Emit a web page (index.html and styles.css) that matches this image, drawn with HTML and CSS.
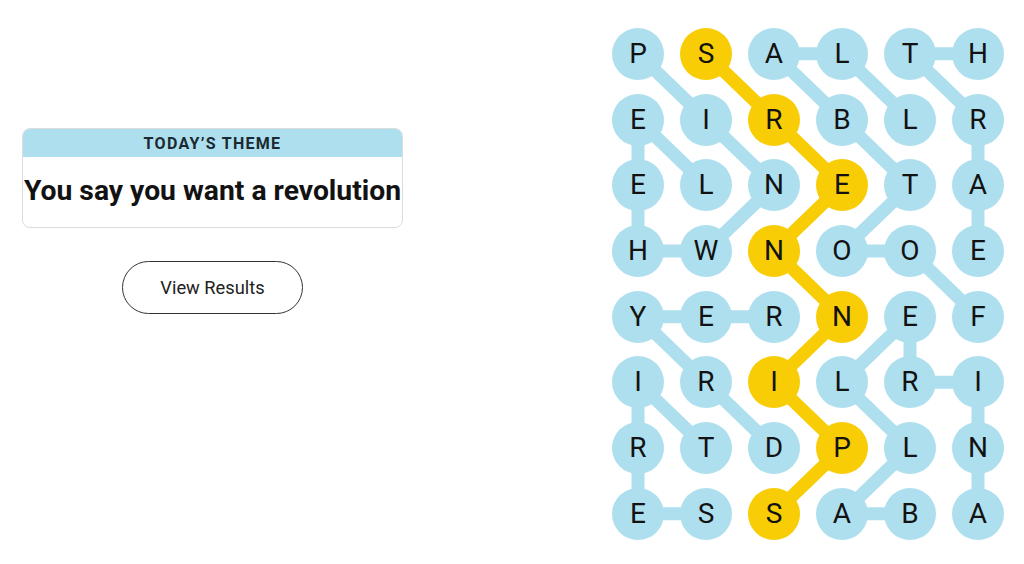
FILE: index.html
```html
<!DOCTYPE html>
<html lang="en">
<head>
<meta charset="utf-8">
<title>Strands</title>
<link rel="stylesheet" href="styles.css">
</head>
<body>
<main class="page">
  <section class="side">
    <div class="theme-card">
      <div class="theme-head">TODAY’S THEME</div>
      <div class="theme-body">You say you want a revolution</div>
    </div>
    <button class="results-btn" type="button">View Results</button>
  </section>

  <section class="board">
    <svg class="links" viewBox="0 0 408 525.6" width="408" height="525.6" aria-hidden="true">
      <g class="found" fill="none" stroke-width="13" stroke-linejoin="round">
        <!-- PINWHEEL -->
        <polyline points="34,32.85 102,98.55 170,164.25 102,229.95 34,229.95 34,164.25 34,98.55 102,164.25"/>
        <!-- FOOTBALL -->
        <polyline points="374,295.65 306,229.95 238,229.95 306,164.25 238,98.55 170,32.85 238,32.85 306,98.55"/>
        <!-- EARTH -->
        <polyline points="374,229.95 374,164.25 374,98.55 306,32.85 374,32.85"/>
        <!-- DRYER -->
        <polyline points="170,427.05 102,361.35 34,295.65 102,295.65 170,295.65"/>
        <!-- TIRES -->
        <polyline points="102,427.05 34,361.35 34,427.05 34,492.75 102,492.75"/>
        <!-- BALLERINA -->
        <polyline points="306,492.75 238,492.75 306,427.05 238,361.35 306,295.65 306,361.35 374,361.35 374,427.05 374,492.75"/>
      </g>
      <g class="spangram" fill="none" stroke-width="13" stroke-linejoin="round">
        <!-- SPINNERS -->
        <polyline points="102,32.85 170,98.55 238,164.25 170,229.95 238,295.65 170,361.35 238,427.05 170,492.75"/>
      </g>
    </svg>
    <div class="grid">
      <span class="cell">P</span><span class="cell gold">S</span><span class="cell">A</span><span class="cell">L</span><span class="cell">T</span><span class="cell">H</span>
      <span class="cell">E</span><span class="cell">I</span><span class="cell gold">R</span><span class="cell">B</span><span class="cell">L</span><span class="cell">R</span>
      <span class="cell">E</span><span class="cell">L</span><span class="cell">N</span><span class="cell gold">E</span><span class="cell">T</span><span class="cell">A</span>
      <span class="cell">H</span><span class="cell">W</span><span class="cell gold">N</span><span class="cell">O</span><span class="cell">O</span><span class="cell">E</span>
      <span class="cell">Y</span><span class="cell">E</span><span class="cell">R</span><span class="cell gold">N</span><span class="cell">E</span><span class="cell">F</span>
      <span class="cell">I</span><span class="cell">R</span><span class="cell gold">I</span><span class="cell">L</span><span class="cell">R</span><span class="cell">I</span>
      <span class="cell">R</span><span class="cell">T</span><span class="cell">D</span><span class="cell gold">P</span><span class="cell">L</span><span class="cell">N</span>
      <span class="cell">E</span><span class="cell">S</span><span class="cell gold">S</span><span class="cell">A</span><span class="cell">B</span><span class="cell">A</span>
    </div>
  </section>
</main>
</body>
</html>
```

FILE: styles.css
```css
* {
  box-sizing: border-box;
}

html, body {
  margin: 0;
  padding: 0;
  background: #ffffff;
}

body {
  font-family: Roboto, "Liberation Sans", Arial, sans-serif;
  color: #121212;
}

.page {
  display: flex;
  width: 1024px;
  height: 564px;
  overflow: hidden;
}

.side {
  width: 425px;
  flex: 0 0 425px;
  padding: 128px 22px 0 22px;
  display: flex;
  flex-direction: column;
  align-items: center;
}

.theme-card {
  width: 381px;
  border: 1px solid #dcdcdc;
  border-radius: 8px;
  overflow: hidden;
  background: #ffffff;
}

.theme-head {
  height: 28px;
  line-height: 29px;
  background: #aedfee;
  text-align: center;
  font-size: 16px;
  font-weight: 700;
  letter-spacing: 1.3px;
  color: #1a2a30;
}

.theme-body {
  height: 70px;
  padding-top: 17.5px;
  text-align: center;
  font-size: 28.3px;
  line-height: 32px;
  font-weight: 700;
  letter-spacing: 0;
  color: #121212;
  white-space: nowrap;
}

.results-btn {
  margin-top: 33px;
  width: 181px;
  height: 53px;
  border: 1.5px solid #333333;
  border-radius: 27px;
  background: #ffffff;
  font-family: Roboto, "Liberation Sans", Arial, sans-serif;
  font-size: 18.3px;
  color: #222222;
  padding: 0;
}

.board {
  position: relative;
  width: 408px;
  height: 525.6px;
  margin-left: 179px;
  margin-top: 21.15px;
}

.links {
  position: absolute;
  left: 0;
  top: 0;
}

.found {
  stroke: #aedfee;
}

.spangram {
  stroke: #f8cd05;
}

.grid {
  position: relative;
  display: grid;
  grid-template-columns: repeat(6, 68px);
  grid-template-rows: repeat(8, 65.7px);
}

.cell {
  justify-self: center;
  align-self: center;
  width: 52px;
  height: 52px;
  border-radius: 50%;
  background: #aedfee;
  display: flex;
  align-items: center;
  justify-content: center;
  font-size: 28px;
  font-weight: 400;
  color: #121212;
  line-height: 1;
}

.cell.gold {
  background: #f8cd05;
}
```
